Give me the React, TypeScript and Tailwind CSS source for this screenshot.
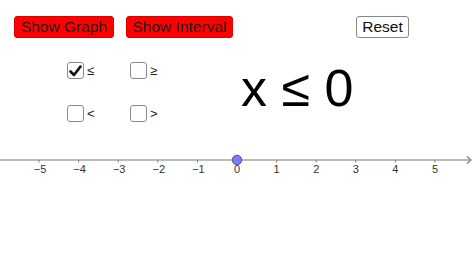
import React, { useState } from "react";

const ticks = [-6, -5, -4, -3, -2, -1, 0, 1, 2, 3, 4, 5];
const X0 = 237;
const STEP = 39.6;

function Box({ checked, label }: { checked?: boolean; label: string }) {
  return (
    <div className="flex items-center gap-[3px] h-[17px]">
      <span className="w-[17px] h-[17px] rounded-[3px] border border-[#8a8a8a] bg-white flex items-center justify-center">
        {checked && (
          <svg width="13" height="12" viewBox="0 0 13 12">
            <path d="M1.5 6.5 L5 10 L11.5 1.5" fill="none" stroke="#111" strokeWidth="2.6" strokeLinecap="round" strokeLinejoin="round" />
          </svg>
        )}
      </span>
      <span className="text-[13px] leading-none text-[#222]">{label}</span>
    </div>
  );
}

export default function App() {
  const [sel] = useState("le");
  return (
    <div className="w-[474px] h-[257px] bg-white overflow-hidden font-['Liberation_Sans',Arial,sans-serif]">
      {/* buttons */}
      <div className="flex pt-[16px] pl-[14px]">
        <button className="w-[100px] h-[22px] rounded-[3px] bg-[#ff0000] border border-[#e00000] text-[15.5px] leading-none text-[#1a1a1a]">
          Show Graph
        </button>
        <button className="ml-[12px] w-[107px] h-[22px] rounded-[3px] bg-[#ff0000] border border-[#e00000] text-[15.5px] leading-none text-[#1a1a1a]">
          Show Interval
        </button>
        <button className="ml-[123px] w-[53px] h-[22px] rounded-[3px] bg-white border border-[#888] text-[15.5px] leading-none text-[#111]">
          Reset
        </button>
      </div>

      {/* checkboxes + expression */}
      <div className="flex mt-[24px]">
        <div className="ml-[67px] grid grid-cols-[63px_40px] gap-y-[26px]">
          <Box checked={sel === "le"} label="≤" />
          <Box label="≥" />
          <Box label="<" />
          <Box label=">" />
        </div>
        <div className="ml-[71px] text-[52px] leading-[52px] text-black whitespace-nowrap">x ≤ 0</div>
      </div>

      {/* number line */}
      <svg width="474" height="40" viewBox="0 0 474 40" className="mt-[28px] block">
        <line x1="0" y1="10" x2="471" y2="10" stroke="#7a7a7a" strokeWidth="1.2" />
        <path d="M467 6.5 L471 10 L467 13.5" fill="none" stroke="#7a7a7a" strokeWidth="1.2" />
        {ticks.map((t) => {
          const x = X0 + t * STEP;
          return (
            <g key={t}>
              <line x1={x} y1="10" x2={x} y2="12.5" stroke="#7a7a7a" strokeWidth="1" />
              {t !== -6 && (
                <text
                  x={t < 0 ? x + 1 : x}
                  y="23"
                  textAnchor="middle"
                  fontSize="11"
                  fill="#333"
                  fontFamily="Liberation Sans, Arial, sans-serif"
                >
                  {t < 0 ? `\u2212${-t}` : t}
                </text>
              )}
            </g>
          );
        })}
        <circle cx={X0} cy="10" r="4.8" fill="#7b7bf0" stroke="#3d3d9a" strokeWidth="0.8" />
      </svg>
    </div>
  );
}
